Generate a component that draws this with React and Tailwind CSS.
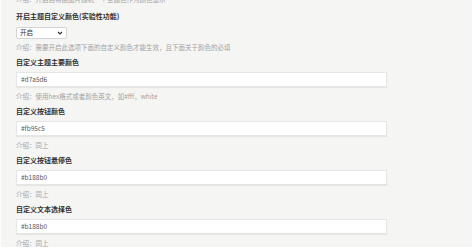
import React from 'react';

const font = { fontFamily: '"Noto Sans CJK SC", "Noto Sans", sans-serif' };

const sections = [
  { label: '自定义主题主要颜色', value: '#d7a5d6', help: '介绍：使用hex格式或者颜色英文，如#fff，white' },
  { label: '自定义按钮颜色', value: '#fb95c5', help: '介绍：同上' },
  { label: '自定义按钮悬停色', value: '#b188b0', help: '介绍：同上' },
  { label: '自定义文本选择色', value: '#b188b0', help: '介绍：同上' },
];

function Help({ children }) {
  return <div className="h-[12px] leading-[12px] text-[6.5px] text-[#a3a3a3] whitespace-nowrap">{children}</div>;
}

function Label({ children }) {
  return <div className="h-[12px] leading-[12px] text-[7px] font-bold text-[#333]">{children}</div>;
}

export default function App() {
  return (
    <div className="w-[474px] h-[250px] bg-white overflow-hidden" style={font}>
      <div className="ml-[1px] w-[471px] h-[247px] bg-[#f5f5f3] pl-[15px] overflow-hidden">
        <div className="-mt-[7px]">
          <Help>介绍：开启后将由图片随机一个主题色作为颜色显示</Help>
        </div>
        <div className="mt-[5px]">
          <Label>开启主题自定义颜色(实验性功能)</Label>
        </div>
        <div className="mt-[5px] w-[51px] h-[12px] bg-white border border-[#d4d4d4] rounded-[2px] flex items-center justify-between px-[3px] text-[6.5px] text-[#333]">
          <span>开启</span>
          <svg width="6" height="4" viewBox="0 0 6 4"><path d="M1 1l2 2 2-2" stroke="#333" strokeWidth="1.2" fill="none" /></svg>
        </div>
        <div className="mt-[2px]">
          <Help>介绍：需要开启此选项下面的自定义颜色才能生效，且下面关于颜色的必填</Help>
        </div>
        {sections.map((s, i) => (
          <div key={i} className="mt-[3px]">
            <Label>{s.label}</Label>
            <div className="mt-[4px] w-[371px] h-[15px] bg-white border border-[#e6e6e6] shadow-[0_1px_1px_rgba(0,0,0,0.06)] flex items-center pl-[4px] text-[6.5px] text-[#555]">
              {s.value}
            </div>
            <div className="mt-[3px]">
              <Help>{s.help}</Help>
            </div>
          </div>
        ))}
      </div>
    </div>
  );
}
